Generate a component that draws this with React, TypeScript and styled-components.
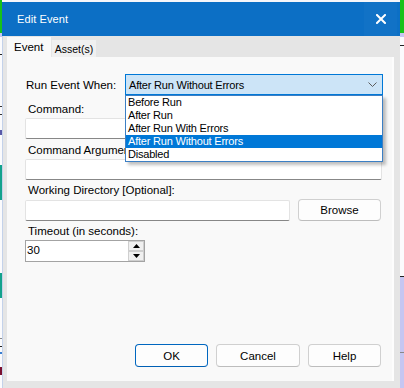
import React from "react";
import styled, { createGlobalStyle } from "styled-components";

const Global = createGlobalStyle`
  html, body { margin: 0; padding: 0; background: #f6f6fa; overflow: hidden; }
  body { font-family: "Liberation Sans", Arial, sans-serif; color: #000; }
  * { box-sizing: border-box; }
`;

const Screen = styled.div`
  width: 404px;
  height: 388px;
  display: flex;
  background: #f6f6fa;
`;

const Edge = styled.div<{ $w: number }>`
  width: ${(p) => p.$w}px;
  flex: none;
  display: flex;
  flex-direction: column;
  background: #fbfbfd;
`;

const Mark = styled.div<{ $h: number; $c: string; $mt?: number; $grow?: boolean }>`
  height: ${(p) => p.$h}px;
  background: ${(p) => p.$c};
  margin-top: ${(p) => p.$mt ?? 0}px;
  flex: ${(p) => (p.$grow ? "1" : "none")};
`;

const Dialog = styled.div`
  width: 398px;
  flex: none;
  margin-top: 2px;
  display: flex;
  flex-direction: column;
`;

const TitleBar = styled.div`
  height: 34px;
  flex: none;
  display: flex;
  align-items: center;
  background: #0c6fc5;
  color: #fff;
  padding-left: 15px;
  font-size: 11px;
`;

const TitleText = styled.span`
  letter-spacing: 0.1px;
`;

const CloseBox = styled.div`
  margin-left: auto;
  margin-right: 3px;
  width: 33px;
  height: 34px;
  display: flex;
  align-items: center;
  justify-content: center;
  background: #1172c6;
`;

const Body = styled.div`
  flex: 1;
  display: flex;
  flex-direction: column;
  background: #e5e5e5;
  border-left: 1px solid #c4d2ea;
  padding: 1px 6px 7px 4px;
`;

const TabStrip = styled.div`
  height: 20px;
  flex: none;
  display: flex;
  align-items: flex-end;
`;

const Tab = styled.div<{ $active?: boolean }>`
  width: 44px;
  height: ${(p) => (p.$active ? 20 : 17)}px;
  margin-left: ${(p) => (p.$active ? 0 : 1)}px;
  background: ${(p) => (p.$active ? "#f9f9f9" : "#f0f0f0")};
  display: flex;
  align-items: center;
  justify-content: ${(p) => (p.$active ? "flex-start" : "center")};
  padding-left: ${(p) => (p.$active ? 7 : 0)}px;
  padding-bottom: ${(p) => (p.$active ? 1 : 0)}px;
  font-size: ${(p) => (p.$active ? 11.5 : 10.5)}px;
`;

const Page = styled.div`
  flex: 1;
  position: relative;
  display: flex;
  flex-direction: column;
  background: #f9f9f9;
  border-right: 2px solid #fdfdfd;
  padding: 0 0 14px 18px;
`;

const Row = styled.div<{ $mt: number; $gap?: number }>`
  display: flex;
  align-items: center;
  margin-top: ${(p) => p.$mt}px;
  gap: ${(p) => p.$gap ?? 0}px;
`;

const RunLabel = styled.div`
  width: 100px;
  padding-left: 1px;
  font-size: 11.5px;
`;

const Label = styled.div<{ $mt: number }>`
  height: 15px;
  line-height: 15px;
  margin-top: ${(p) => p.$mt}px;
  margin-bottom: 1px;
  padding-left: 3px;
  font-size: 11.5px;
  white-space: nowrap;
`;

const SelectWrap = styled.div`
  position: relative;
  width: 258px;
  height: 21px;
`;

const SelectBox = styled.div`
  height: 21px;
  display: flex;
  align-items: center;
  padding: 0 5px 0 3px;
  background: #cce4f7;
  border: 1px solid #0078d7;
  font-size: 11px;
  letter-spacing: -0.2px;
`;

const SelectValue = styled.span`
  flex: 1;
`;

const ListBox = styled.div`
  position: absolute;
  top: 21px;
  left: 0;
  width: 258px;
  background: #fff;
  border: 1px solid #3c7fc4;
  box-shadow: 3px 3px 3px rgba(0, 0, 0, 0.25);
  z-index: 5;
`;

const Option = styled.div<{ $sel?: boolean }>`
  height: 13px;
  line-height: 13px;
  padding-left: 2px;
  font-size: 11px;
  letter-spacing: -0.2px;
  background: ${(p) => (p.$sel ? "#0078d7" : "transparent")};
  color: ${(p) => (p.$sel ? "#fff" : "#000")};
  white-space: nowrap;
`;

const TextBox = styled.div<{ $w: number }>`
  width: ${(p) => p.$w}px;
  height: 21px;
  flex: none;
  background: #fff;
  border: 1px solid #e3e3e3;
  border-bottom-color: #878787;
  border-radius: 2px;
`;

const PushButton = styled.div<{ $w: number; $default?: boolean }>`
  width: ${(p) => p.$w}px;
  height: ${(p) => (p.$default !== undefined ? 23 : 22)}px;
  flex: none;
  display: flex;
  align-items: center;
  justify-content: center;
  background: #fdfdfd;
  border: 1px solid ${(p) => (p.$default ? "#0067c0" : "#d0d0d0")};
  border-bottom-color: ${(p) => (p.$default ? "#0060b5" : "#bdbdbd")};
  border-radius: 4px;
  font-size: 11.5px;
`;

const Spin = styled.div`
  width: 120px;
  height: 22px;
  display: flex;
  background: #fff;
  border: 1px solid #a3a3a3;
`;

const SpinText = styled.div`
  flex: 1;
  padding-left: 1px;
  font-size: 11.5px;
  line-height: 19px;
`;

const SpinButtons = styled.div`
  width: 17px;
  display: flex;
  flex-direction: column;
  padding: 0 0 0 1px;
`;

const SpinBtn = styled.div`
  flex: 1;
  display: flex;
  align-items: center;
  justify-content: center;
  background: #f0f0f0;
  border: 1px solid #cfcfcf;
`;

const ButtonRow = styled.div`
  margin-top: auto;
  display: flex;
  justify-content: flex-end;
  gap: 8px;
  padding-right: 11px;
`;

const Chevron = () => (
  <svg width="9" height="5" viewBox="0 0 9 5">
    <path d="M0.5 0.5 L4.5 4.5 L8.5 0.5" fill="none" stroke="#5c5c5c" strokeWidth="1" />
  </svg>
);

const CloseIcon = () => (
  <svg width="10" height="10" viewBox="0 0 10 10">
    <path d="M1 1 L9 9 M9 1 L1 9" stroke="#fff" strokeWidth="2" strokeLinecap="square" />
  </svg>
);

const Tri = ({ up }: { up?: boolean }) => (
  <svg width="7" height="4" viewBox="0 0 7 4">
    <path d={up ? "M0 4 L3.5 0 L7 4 Z" : "M0 0 L7 0 L3.5 4 Z"} fill="#000" />
  </svg>
);

const options = [
  "Before Run",
  "After Run",
  "After Run With Errors",
  "After Run Without Errors",
  "Disabled",
];

export default function App() {
  const selected = "After Run Without Errors";
  return (
    <>
      <Global />
      <Screen>
        <Edge $w={2}>
          <Mark $h={33} $c="#17c21a" />
          <Mark $h={4} $c="#c6c6f2" />
          <Mark $h={1} $c="#222" $mt={17} />
          <Mark $h={1} $c="#333" $mt={51} />
          <Mark $h={1} $c="#333" $mt={7} />
          <Mark $h={5} $c="#5a5aa8" $mt={15} />
          <Mark $h={35} $c="#13a28c" $mt={30} />
          <Mark $h={25} $c="#13a28c" $mt={73} />
          <Mark $h={1} $c="#888" $mt={40} />
          <Mark $h={1} $c="#222" $mt={7} />
          <Mark $h={2} $c="#3a7fd0" $mt={5} />
          <Mark $h={8} $c="#7a1030" $mt={13} />
        </Edge>
        <Dialog>
          <TitleBar>
            <TitleText>Edit Event</TitleText>
            <CloseBox>
              <CloseIcon />
            </CloseBox>
          </TitleBar>
          <Body>
            <TabStrip>
              <Tab $active>Event</Tab>
              <Tab>Asset(s)</Tab>
            </TabStrip>
            <Page>
              <Row $mt={17}>
                <RunLabel>Run Event When:</RunLabel>
                <SelectWrap>
                  <SelectBox>
                    <SelectValue>{selected}</SelectValue>
                    <Chevron />
                  </SelectBox>
                  <ListBox>
                    {options.map((o) => (
                      <Option key={o} $sel={o === selected}>
                        {o}
                      </Option>
                    ))}
                  </ListBox>
                </SelectWrap>
              </Row>
              <Label $mt={7}>Command:</Label>
              <TextBox $w={357} />
              <Label $mt={4}>Command Arguments [Optional]:</Label>
              <TextBox $w={357} />
              <Label $mt={3}>Working Directory [Optional]:</Label>
              <Row $mt={0} $gap={8}>
                <TextBox $w={265} />
                <PushButton $w={83}>Browse</PushButton>
              </Row>
              <Label $mt={3}>Timeout (in seconds):</Label>
              <Spin>
                <SpinText>30</SpinText>
                <SpinButtons>
                  <SpinBtn>
                    <Tri up />
                  </SpinBtn>
                  <SpinBtn>
                    <Tri />
                  </SpinBtn>
                </SpinButtons>
              </Spin>
              <ButtonRow>
                <PushButton $w={73} $default>
                  OK
                </PushButton>
                <PushButton $w={84} $default={false}>
                  Cancel
                </PushButton>
                <PushButton $w={73} $default={false}>
                  Help
                </PushButton>
              </ButtonRow>
            </Page>
          </Body>
        </Dialog>
        <Edge $w={4}>
          <Mark $h={33} $c="#17c21a" />
          <Mark $h={4} $c="#c6c6f2" />
          <Mark $h={1} $c="#222" $mt={8} />
          <Mark $h={1} $c="#222" $mt={230} />
          <Mark $h={75} $c="#c6c6f2" />
          <Mark $h={1} $c="#888" />
          <Mark $h={1} $c="#c6c6f2" $grow />
        </Edge>
      </Screen>
    </>
  );
}
